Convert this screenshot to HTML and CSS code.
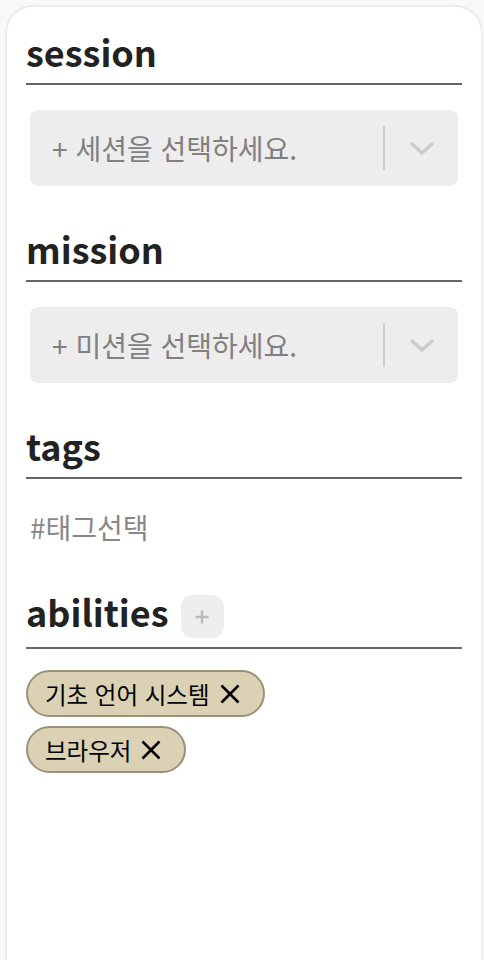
FILE: index.html
```html
<!DOCTYPE html>
<html lang="ko">
<head>
<meta charset="utf-8">
<title>form</title>
<link rel="stylesheet" href="styles.css">
</head>
<body>
<div class="card">
  <section class="section">
    <h2 class="heading">session</h2>
    <div class="select">
      <span class="select-value">+ 세션을 선택하세요.</span>
      <span class="select-sep"></span>
      <span class="select-ind">
        <svg width="24" height="14" viewBox="0 0 24 14"><path d="M2 2 L12 11 L22 2" fill="none" stroke="#cccccc" stroke-width="3.5" stroke-linecap="round" stroke-linejoin="round"/></svg>
      </span>
    </div>
  </section>
  <section class="section">
    <h2 class="heading">mission</h2>
    <div class="select">
      <span class="select-value">+ 미션을 선택하세요.</span>
      <span class="select-sep"></span>
      <span class="select-ind">
        <svg width="24" height="14" viewBox="0 0 24 14"><path d="M2 2 L12 11 L22 2" fill="none" stroke="#cccccc" stroke-width="3.5" stroke-linecap="round" stroke-linejoin="round"/></svg>
      </span>
    </div>
  </section>
  <section class="section">
    <h2 class="heading">tags</h2>
    <div class="tags">#태그선택</div>
  </section>
  <section class="section">
    <h2 class="heading heading-row">
      <span class="heading-text">abilities</span>
      <button class="add-btn" type="button" aria-label="add">
        <svg width="16" height="16" viewBox="0 0 16 16"><path d="M8 1.5 V14.5 M1.5 8 H14.5" stroke="#bbbbbb" stroke-width="2.6" fill="none"/></svg>
      </button>
    </h2>
    <div class="chips">
      <span class="chip">기초 언어 시스템<svg class="chip-x" width="22" height="20" viewBox="0 0 22 20"><path d="M2.5 1.5 L19.5 18.5 M19.5 1.5 L2.5 18.5" stroke="#000" stroke-width="2.5" fill="none"/></svg></span>
      <span class="chip">브라우저<svg class="chip-x" width="22" height="20" viewBox="0 0 22 20"><path d="M2.5 1.5 L19.5 18.5 M19.5 1.5 L2.5 18.5" stroke="#000" stroke-width="2.5" fill="none"/></svg></span>
    </div>
  </section>
</div>
</body>
</html>
```

FILE: styles.css
```css
html, body {
  margin: 0;
  padding: 0;
  background: #f8f8f8;
  overflow: hidden;
}
body {
  font-family: "Noto Sans CJK KR", "Noto Sans", sans-serif;
  color: #222;
}
.card {
  margin: 5px 1px 0 5px;
  border: 2px solid #ececec;
  border-radius: 28px;
  background: #fff;
  padding: 22px 19px 0;
  min-height: 1100px;
}
.section {
  margin-bottom: 40px;
}
.heading {
  margin: 0;
  font-size: 36px;
  line-height: 44px;
  font-weight: 700;
  color: #222;
  padding-bottom: 10px;
  border-bottom: 2px solid #666;
}
.heading-row {
  display: flex;
  align-items: flex-start;
  padding-bottom: 9px;
}
.add-btn {
  margin: 6px 0 0 12px;
  width: 43px;
  height: 43px;
  border: none;
  border-radius: 12px;
  background: #eeeeee;
  display: flex;
  align-items: center;
  justify-content: center;
  padding: 0;
}
.select {
  margin: 25px 4px 0;
  height: 76px;
  background: #ededed;
  border-radius: 8px;
  display: flex;
  align-items: center;
}
.select-value {
  flex: 1;
  padding-left: 22px;
  font-size: 28px;
  line-height: 36px;
  color: #808080;
}
.select-sep {
  width: 2px;
  height: 44px;
  background: #cccccc;
}
.select-ind {
  width: 73px;
  display: flex;
  justify-content: center;
  padding-top: 2px;
}
.tags {
  margin-top: 30px;
  padding: 0 0 4px 4px;
  font-size: 28px;
  line-height: 36px;
  color: #888;
}
.chips {
  margin-top: 21px;
  display: flex;
  flex-direction: column;
  align-items: flex-start;
  gap: 9px;
}
.chip {
  box-sizing: border-box;
  height: 47px;
  display: inline-flex;
  align-items: center;
  padding: 0 22px 0 17px;
  background: #dbd1b4;
  border: 2px solid #9b9179;
  border-radius: 24px;
  font-size: 23.5px;
  color: #000;
}
.chip-x {
  margin-left: 9px;
}
```
